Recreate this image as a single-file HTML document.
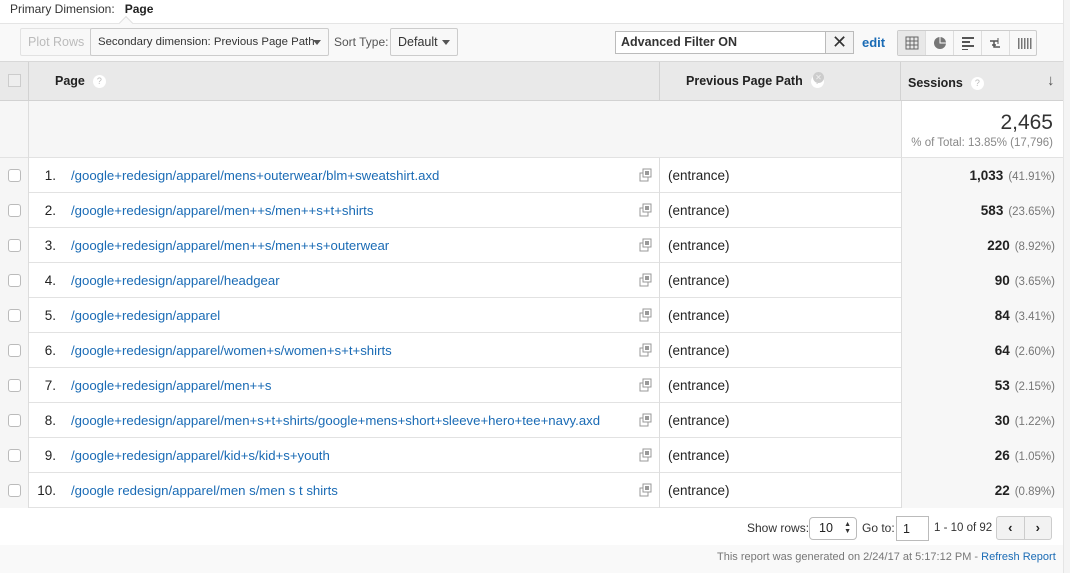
<!DOCTYPE html>
<html><head><meta charset="utf-8"><style>
*{box-sizing:border-box;margin:0;padding:0}
body{width:1070px;height:573px;overflow:hidden;background:#fff;font-family:"Liberation Sans",Arial,sans-serif;font-size:13px;color:#222;position:relative}
.a{position:absolute;white-space:nowrap}
.btn{position:absolute;white-space:nowrap;border:1px solid #ccc;border-radius:2px;background:#f8f8f8;color:#333;font-size:12.5px;line-height:26px;padding:0 7px}
.tri{position:absolute;right:7px;top:11px;width:0;height:0;border-left:4px solid transparent;border-right:4px solid transparent;border-top:5px solid #555}
.q{display:inline-block;width:13px;height:13px;border-radius:50%;background:#fff;color:#bbb;font-size:9px;line-height:13px;text-align:center;font-weight:normal;vertical-align:middle;margin-left:8px}
.row{position:absolute;left:0;width:1063px;height:35px;border-bottom:1px solid #e2e2e2;white-space:nowrap}
.cb{position:absolute;left:0;top:0;width:29px;height:35px;background:#f6f6f6;border-right:1px solid #ddd}
.cb i{position:absolute;left:8px;top:11px;width:13px;height:13px;border:1px solid #bbb;border-radius:3px;background:#fff}
.num{position:absolute;right:1007px;top:10px;font-size:13.5px;color:#222}
.lnk{position:absolute;left:71px;top:10px;color:#1a6bb5;font-size:13.2px}
.ic{position:absolute;left:638px;top:10px}
.pp{position:absolute;left:659px;top:0;width:242px;height:35px;border-left:1px solid #ddd;padding:10px 0 0 8px;font-size:13.5px}
.ss{position:absolute;left:901px;top:0;width:162px;height:35px;background:#f7f7f7;border-left:1px solid #ddd;text-align:right;padding:10px 8px 0 0;font-size:13.5px;font-weight:bold}
.ss span{font-weight:normal;color:#777;font-size:11.5px;margin-left:5px}
</style></head><body>
<div class="a" style="left:10px;top:2px;font-size:12px;color:#333">Primary Dimension:&nbsp;&nbsp; <b style="color:#222">Page</b></div>
<div class="a" style="left:0;top:23px;width:1063px;height:39px;background:#f9f9f9;border-top:1px solid #e5e5e5"></div>
<div class="a" style="left:121px;top:18px;width:10px;height:10px;background:#f9f9f9;border-left:1px solid #e0e0e0;border-top:1px solid #e0e0e0;transform:rotate(45deg)"></div>
<div class="a" style="left:1063px;top:0;width:7px;height:573px;background:#f4f4f4;border-left:1px solid #e5e5e5"></div>
<div class="btn" style="left:20px;top:28px;height:28px;color:#bbb;border-color:#e2e2e2">Plot Rows</div>
<div class="btn" style="left:90px;top:28px;height:28px;width:239px;font-size:11.4px;padding:0 7px">Secondary dimension: Previous Page Path<span class="tri"></span></div>
<div class="a" style="left:334px;top:35px;font-size:12px;color:#555">Sort Type:</div>
<div class="btn" style="left:390px;top:28px;height:28px;width:68px">Default<span class="tri"></span></div>
<div class="a" style="left:615px;top:31px;width:211px;height:23px;border:1px solid #bbb;background:#fff;font-size:12.5px;font-weight:bold;padding:3px 5px;color:#333">Advanced Filter ON</div>
<div class="a" style="left:825px;top:31px;width:29px;height:23px;border:1px solid #bbb;background:#f3f3f3;text-align:center;font-size:18px;line-height:21px;color:#333">✕</div>
<div class="a" style="left:862px;top:35px;font-size:13px;font-weight:bold;color:#1a6bb5">edit</div>
<div class="a" style="left:897px;top:30px;width:140px;height:26px;border:1px solid #ccc;border-radius:2px;background:#f8f8f8;display:flex">
<div style="width:28px;border-right:1px solid #ddd;background:#e8e8e8"><svg width="28" height="24"><g stroke="#666" fill="none"><rect x="8" y="6" width="12" height="12"/><path d="M12 6v12M16 6v12M8 10h12M8 14h12"/></g></svg></div>
<div style="width:28px;border-right:1px solid #ddd"><svg width="28" height="24"><circle cx="14" cy="12" r="6" fill="#777"/><path d="M14 6v6h6" stroke="#fff" fill="none"/></svg></div>
<div style="width:28px;border-right:1px solid #ddd"><svg width="28" height="24"><g fill="#555"><rect x="8" y="6" width="12" height="2"/><rect x="8" y="10" width="8" height="2"/><rect x="8" y="14" width="12" height="2"/><rect x="8" y="18" width="6" height="1"/></g></svg></div>
<div style="width:28px;border-right:1px solid #ddd"><svg width="28" height="24"><path d="M8 10h8M12 10v6h6M10 14h4" stroke="#555" fill="none" stroke-width="1.5"/><path d="M16 7v6" stroke="#555"/></svg></div>
<div style="width:28px"><svg width="28" height="24"><g fill="#777"><rect x="8" y="7" width="1.5" height="11"/><rect x="11" y="7" width="1.5" height="11"/><rect x="14" y="7" width="1.5" height="11"/><rect x="17" y="7" width="1.5" height="11"/><rect x="20" y="7" width="1.5" height="11"/></g></svg></div>
</div>
<!-- header -->
<div class="a" style="left:0;top:61px;width:1063px;height:40px;background:#e9e9e9;border-top:1px solid #d8d8d8;border-bottom:1px solid #d2d2d2"></div>
<div class="a" style="left:0;top:62px;width:29px;height:38px;border-right:1px solid #d2d2d2"><i style="position:absolute;left:8px;top:12px;width:13px;height:13px;border:1px solid #ccc;background:#eee"></i></div>
<div class="a" style="left:55px;top:74px;font-weight:bold;font-size:12.5px">Page<span class="q">?</span></div>
<div class="a" style="left:659px;top:62px;width:242px;height:38px;border-left:1px solid #d2d2d2;border-right:1px solid #d2d2d2"></div>
<div class="a" style="left:686px;top:74px;font-weight:bold;font-size:12.5px">Previous Page Path<span class="q">?</span></div>
<div class="a" style="left:813px;top:72px;width:11px;height:11px;border-radius:50%;background:#ccc;color:#eee;font-size:8px;line-height:11px;text-align:center">✕</div>
<div class="a" style="left:908px;top:76px;font-weight:bold;font-size:12.5px">Sessions<span class="q">?</span></div>
<div class="a" style="left:1047px;top:72px;font-size:15px;color:#555">↓</div>
<!-- totals -->
<div class="a" style="left:0;top:101px;width:901px;height:57px;background:#f6f6f6;border-bottom:1px solid #e2e2e2"></div>
<div class="a" style="left:0;top:101px;width:29px;height:57px;border-right:1px solid #ddd"></div>
<div class="a" style="left:901px;top:101px;width:162px;height:57px;background:#fff;border-left:1px solid #ddd;border-bottom:1px solid #e2e2e2;text-align:right;padding:10px 10px 0 0">
<div style="font-size:21px;color:#333;line-height:24px">2,465</div>
<div style="font-size:11.5px;color:#888;margin-top:2px">% of Total: 13.85% (17,796)</div></div>
<!-- rows -->
<div class="row" style="top:158px"><div class="cb"><i></i></div><span class="num">1.</span><span class="lnk">/google+redesign/apparel/mens+outerwear/blm+sweatshirt.axd</span><svg class="ic" width="14" height="14"><rect x="5" y="1" width="8" height="8" fill="#fff" stroke="#999"/><rect x="7" y="3" width="4" height="4" fill="#999"/><path d="M5 5H2v8h8v-4" fill="none" stroke="#999"/></svg><div class="pp">(entrance)</div><div class="ss">1,033<span>(41.91%)</span></div></div>
<div class="row" style="top:193px"><div class="cb"><i></i></div><span class="num">2.</span><span class="lnk">/google+redesign/apparel/men++s/men++s+t+shirts</span><svg class="ic" width="14" height="14"><rect x="5" y="1" width="8" height="8" fill="#fff" stroke="#999"/><rect x="7" y="3" width="4" height="4" fill="#999"/><path d="M5 5H2v8h8v-4" fill="none" stroke="#999"/></svg><div class="pp">(entrance)</div><div class="ss">583<span>(23.65%)</span></div></div>
<div class="row" style="top:228px"><div class="cb"><i></i></div><span class="num">3.</span><span class="lnk">/google+redesign/apparel/men++s/men++s+outerwear</span><svg class="ic" width="14" height="14"><rect x="5" y="1" width="8" height="8" fill="#fff" stroke="#999"/><rect x="7" y="3" width="4" height="4" fill="#999"/><path d="M5 5H2v8h8v-4" fill="none" stroke="#999"/></svg><div class="pp">(entrance)</div><div class="ss">220<span>(8.92%)</span></div></div>
<div class="row" style="top:263px"><div class="cb"><i></i></div><span class="num">4.</span><span class="lnk">/google+redesign/apparel/headgear</span><svg class="ic" width="14" height="14"><rect x="5" y="1" width="8" height="8" fill="#fff" stroke="#999"/><rect x="7" y="3" width="4" height="4" fill="#999"/><path d="M5 5H2v8h8v-4" fill="none" stroke="#999"/></svg><div class="pp">(entrance)</div><div class="ss">90<span>(3.65%)</span></div></div>
<div class="row" style="top:298px"><div class="cb"><i></i></div><span class="num">5.</span><span class="lnk">/google+redesign/apparel</span><svg class="ic" width="14" height="14"><rect x="5" y="1" width="8" height="8" fill="#fff" stroke="#999"/><rect x="7" y="3" width="4" height="4" fill="#999"/><path d="M5 5H2v8h8v-4" fill="none" stroke="#999"/></svg><div class="pp">(entrance)</div><div class="ss">84<span>(3.41%)</span></div></div>
<div class="row" style="top:333px"><div class="cb"><i></i></div><span class="num">6.</span><span class="lnk">/google+redesign/apparel/women+s/women+s+t+shirts</span><svg class="ic" width="14" height="14"><rect x="5" y="1" width="8" height="8" fill="#fff" stroke="#999"/><rect x="7" y="3" width="4" height="4" fill="#999"/><path d="M5 5H2v8h8v-4" fill="none" stroke="#999"/></svg><div class="pp">(entrance)</div><div class="ss">64<span>(2.60%)</span></div></div>
<div class="row" style="top:368px"><div class="cb"><i></i></div><span class="num">7.</span><span class="lnk">/google+redesign/apparel/men++s</span><svg class="ic" width="14" height="14"><rect x="5" y="1" width="8" height="8" fill="#fff" stroke="#999"/><rect x="7" y="3" width="4" height="4" fill="#999"/><path d="M5 5H2v8h8v-4" fill="none" stroke="#999"/></svg><div class="pp">(entrance)</div><div class="ss">53<span>(2.15%)</span></div></div>
<div class="row" style="top:403px"><div class="cb"><i></i></div><span class="num">8.</span><span class="lnk">/google+redesign/apparel/men+s+t+shirts/google+mens+short+sleeve+hero+tee+navy.axd</span><svg class="ic" width="14" height="14"><rect x="5" y="1" width="8" height="8" fill="#fff" stroke="#999"/><rect x="7" y="3" width="4" height="4" fill="#999"/><path d="M5 5H2v8h8v-4" fill="none" stroke="#999"/></svg><div class="pp">(entrance)</div><div class="ss">30<span>(1.22%)</span></div></div>
<div class="row" style="top:438px"><div class="cb"><i></i></div><span class="num">9.</span><span class="lnk">/google+redesign/apparel/kid+s/kid+s+youth</span><svg class="ic" width="14" height="14"><rect x="5" y="1" width="8" height="8" fill="#fff" stroke="#999"/><rect x="7" y="3" width="4" height="4" fill="#999"/><path d="M5 5H2v8h8v-4" fill="none" stroke="#999"/></svg><div class="pp">(entrance)</div><div class="ss">26<span>(1.05%)</span></div></div>
<div class="row" style="top:473px"><div class="cb"><i></i></div><span class="num">10.</span><span class="lnk">/google redesign/apparel/men s/men s t shirts</span><svg class="ic" width="14" height="14"><rect x="5" y="1" width="8" height="8" fill="#fff" stroke="#999"/><rect x="7" y="3" width="4" height="4" fill="#999"/><path d="M5 5H2v8h8v-4" fill="none" stroke="#999"/></svg><div class="pp">(entrance)</div><div class="ss">22<span>(0.89%)</span></div></div>
<!-- footer -->
<div class="a" style="left:0;top:545px;width:1063px;height:28px;background:#f9f9f9"></div>
<div class="a" style="left:747px;top:521px;font-size:12px;color:#333">Show rows:</div>
<div class="a" style="left:809px;top:517px;width:48px;height:23px;border:1px solid #bbb;border-radius:4px;background:#fff;font-size:12.5px;padding:3px 0 0 9px">10<span style="position:absolute;right:5px;top:3px;font-size:7px;line-height:7px;color:#333">▲<br>▼</span></div>
<div class="a" style="left:862px;top:521px;font-size:12px;color:#333">Go to:</div>
<div class="a" style="left:896px;top:516px;width:33px;height:25px;border:1px solid #bbb;background:#fff;font-size:12.5px;padding:5px 0 0 6px">1</div>
<div class="a" style="left:934px;top:522px;font-size:11.5px;color:#333">1 - 10 of 92</div>
<div class="a" style="left:996px;top:516px;width:56px;height:24px;border:1px solid #ccc;border-radius:3px;background:#f2f2f2;display:flex;font-size:13px;font-weight:bold;line-height:22px;text-align:center"><div style="width:28px;border-right:1px solid #ccc">‹</div><div style="width:27px">›</div></div>
<div class="a" style="left:717px;top:551px;font-size:11px;color:#777">This report was generated on 2/24/17 at 5:17:12 PM - <span style="color:#1a6bb5">Refresh Report</span></div>
</body></html>
